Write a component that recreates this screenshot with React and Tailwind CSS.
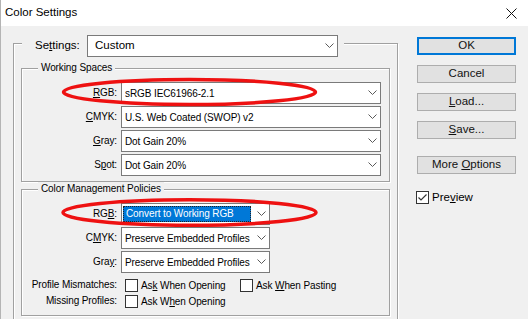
import React from 'react';

const Chevron = () => (
  <svg width="9" height="6" viewBox="0 0 9 6" className="shrink-0">
    <path d="M0.5 0.5 L4.5 4.5 L8.5 0.5" fill="none" stroke="#5a5a5a" strokeWidth="1" />
  </svg>
);

const Select = ({ children, className = '' }) => (
  <div className={`h-[22px] bg-white border border-[#7a7a7a] flex items-center pl-[3px] pr-[3px] ${className}`}>
    <span className="flex-1 whitespace-nowrap overflow-hidden">{children}</span>
    <Chevron />
  </div>
);

const CheckBox = ({ checked }) => (
  <div className="w-[13px] h-[13px] shrink-0 border border-[#333] bg-white flex items-center justify-center">
    {checked && (
      <svg width="11" height="11" viewBox="0 0 11 11">
        <path d="M1.5 5.5 L4 8 L9.5 2.5" fill="none" stroke="#333" strokeWidth="1.2" />
      </svg>
    )}
  </div>
);

const Btn = ({ children, primary, className = '' }) => (
  <div
    className={`h-[18px] w-[99px] flex items-center justify-center bg-[#e1e1e1] text-[11.5px] text-[#111] ${
      primary ? 'border-2 border-[#0078d7]' : 'border border-[#adadad]'
    } ${className}`}
  >
    <span>{children}</span>
  </div>
);

const Group = ({ title, className = '', children }) => (
  <div className={`border border-[#a0a0a0] shadow-[inset_1px_1px_0_#fff,1px_1px_0_#fff] ${className}`}>
    <div className="-mt-[8px] ml-[16px] w-fit px-[3px] bg-[#f0f0f0] h-[14px] leading-[14px]">{title}</div>
    {children}
  </div>
);

const Label = ({ children }) => <div className="text-right leading-[14px]">{children}</div>;

export default function App() {
  return (
    <div className="relative w-[528px] h-[319px] overflow-hidden bg-[#f0f0f0] border-l border-[#b4b4b4] font-['Liberation_Sans',Arial,sans-serif] text-[10px] text-black">
      {/* title bar */}
      <div className="h-[26px] bg-white flex items-center justify-between pl-[4px] pr-[11px]">
        <span className="text-[11.5px]">Color Settings</span>
        <svg width="11" height="11" viewBox="0 0 11 11">
          <path d="M0.5 0.5 L10.5 10.5 M10.5 0.5 L0.5 10.5" stroke="#111" strokeWidth="1" />
        </svg>
      </div>

      <div className="flex items-start">
        {/* main settings area */}
        <div className="ml-[12px] mt-[17px] w-[385px] h-[300px] tracking-[-0.1px] border border-[#a0a0a0] shadow-[inset_1px_1px_0_#fff,1px_1px_0_#fff]">
          <div className="-mt-[9px] ml-[8px] w-fit pl-[13px] pr-[6px] bg-[#f0f0f0] flex items-center text-[11.5px] tracking-normal">
            <span className="w-[52px]">
              Se<u className="underline-offset-1">t</u>tings:
            </span>
            <Select className="w-[251px] pl-[7px]">Custom</Select>
          </div>

          <Group title="Working Spaces" className="ml-[7px] mt-[11px] w-[369px] h-[114px]">
            <div className="mt-[7px] grid grid-cols-[95px_260px] gap-x-[4px] gap-y-[2px] items-center">
              <Label>
                <u className="underline-offset-1">R</u>GB:
              </Label>
              <Select>sRGB IEC61966-2.1</Select>
              <Label>
                <u className="underline-offset-1">C</u>MYK:
              </Label>
              <Select>U.S. Web Coated (SWOP) v2</Select>
              <Label>
                <u className="underline-offset-1">G</u>ray:
              </Label>
              <Select>Dot Gain 20%</Select>
              <Label>
                S<u className="underline-offset-1">p</u>ot:
              </Label>
              <Select>Dot Gain 20%</Select>
            </div>
          </Group>

          <Group title="Color Management Policies" className="ml-[7px] mt-[7px] w-[369px] h-[127px]">
            <div className="mt-[7px] grid grid-cols-[95px_149px] gap-x-[4px] gap-y-[2px] items-center">
              <Label>
                RG<u className="underline-offset-1">B</u>:
              </Label>
              <div className="h-[22px] bg-white border border-[#7a7a7a] flex items-center pl-[1px] pr-[3px] py-[2px]">
                <span className="flex-1 h-full mr-[6px] bg-[#0078d7] text-white border border-dotted border-[#222] flex items-center pl-[2px] leading-none">
                  Convert to Working RGB
                </span>
                <Chevron />
              </div>
              <Label>
                C<u className="underline-offset-1">M</u>YK:
              </Label>
              <Select>Preserve Embedded Profiles</Select>
              <Label>
                Gra<u className="underline-offset-1">y</u>:
              </Label>
              <Select>Preserve Embedded Profiles</Select>
            </div>

            <div className="mt-[4px] grid grid-cols-[95px_1fr] gap-x-[4px]">
              <div className="text-right h-[16px] leading-[16px]">Profile Mismatches:</div>
              <div className="flex items-center pl-[4px]">
                <div className="w-[115px] flex items-center gap-[3px]">
                  <CheckBox />
                  <span>
                    As<u className="underline-offset-1">k</u> When Opening
                  </span>
                </div>
                <div className="flex items-center gap-[3px]">
                  <CheckBox />
                  <span>
                    Ask <u className="underline-offset-1">W</u>hen Pasting
                  </span>
                </div>
              </div>
              <div className="text-right h-[16px] leading-[16px]">Missing Profiles:</div>
              <div className="flex items-center pl-[4px] gap-[3px]">
                <CheckBox />
                <span>
                  Ask W<u className="underline-offset-1">h</u>en Opening
                </span>
              </div>
            </div>
          </Group>
        </div>

        {/* buttons */}
        <div className="ml-[19px] mt-[11px] flex flex-col">
          <Btn primary>OK</Btn>
          <Btn className="mt-[10px]">Cancel</Btn>
          <Btn className="mt-[10px]">
            <u className="underline-offset-1">L</u>oad...
          </Btn>
          <Btn className="mt-[10px]">
            <u className="underline-offset-1">S</u>ave...
          </Btn>
          <Btn className="mt-[17px]">
            More <u className="underline-offset-1">O</u>ptions
          </Btn>
          <div className="mt-[15px] -ml-[1px] flex items-center gap-[3px] text-[11.5px]">
            <CheckBox checked />
            <span>
              Pre<u className="underline-offset-1">v</u>iew
            </span>
          </div>
        </div>
      </div>

      {/* red annotation ellipses */}
      <svg className="absolute inset-0 pointer-events-none" width="528" height="319">
        <ellipse cx="188.5" cy="92" rx="126" ry="12.5" fill="none" stroke="#ee1111" strokeWidth="3.5" />
        <ellipse cx="188.5" cy="212.5" rx="126.5" ry="12.8" fill="none" stroke="#ee1111" strokeWidth="3.5" />
      </svg>
    </div>
  );
}
